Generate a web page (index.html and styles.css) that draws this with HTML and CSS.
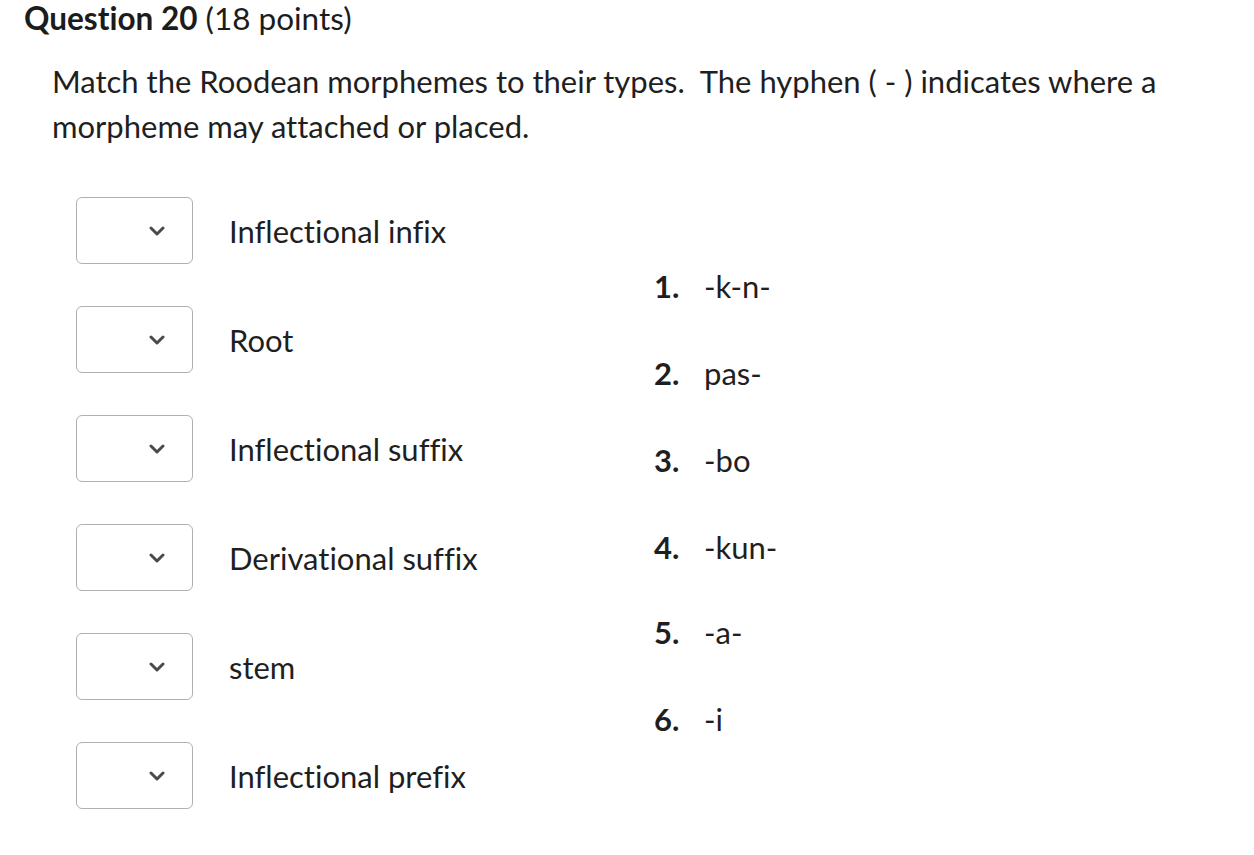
FILE: index.html
```html
<!DOCTYPE html>
<html>
<head>
<meta charset="utf-8">
<link rel="stylesheet" href="styles.css">
</head>
<body>
<div class="page">
  <h2 class="title"><b>Question 20</b> (18 points)</h2>
  <p class="prompt">Match the Roodean morphemes to their types.&nbsp; The hyphen ( - ) indicates where a morpheme may attached or placed.</p>
  <div class="match">
    <div class="left">
      <div class="row"><div class="select"><svg class="chev" viewBox="0 0 16 10" width="16" height="10"><path d="M2 2 L8 8 L14 2" fill="none" stroke="#4a4a4a" stroke-width="3" stroke-linecap="round" stroke-linejoin="round"/></svg></div><span class="label">Inflectional infix</span></div>
      <div class="row"><div class="select"><svg class="chev" viewBox="0 0 16 10" width="16" height="10"><path d="M2 2 L8 8 L14 2" fill="none" stroke="#4a4a4a" stroke-width="3" stroke-linecap="round" stroke-linejoin="round"/></svg></div><span class="label">Root</span></div>
      <div class="row"><div class="select"><svg class="chev" viewBox="0 0 16 10" width="16" height="10"><path d="M2 2 L8 8 L14 2" fill="none" stroke="#4a4a4a" stroke-width="3" stroke-linecap="round" stroke-linejoin="round"/></svg></div><span class="label">Inflectional suffix</span></div>
      <div class="row"><div class="select"><svg class="chev" viewBox="0 0 16 10" width="16" height="10"><path d="M2 2 L8 8 L14 2" fill="none" stroke="#4a4a4a" stroke-width="3" stroke-linecap="round" stroke-linejoin="round"/></svg></div><span class="label">Derivational suffix</span></div>
      <div class="row"><div class="select"><svg class="chev" viewBox="0 0 16 10" width="16" height="10"><path d="M2 2 L8 8 L14 2" fill="none" stroke="#4a4a4a" stroke-width="3" stroke-linecap="round" stroke-linejoin="round"/></svg></div><span class="label">stem</span></div>
      <div class="row"><div class="select"><svg class="chev" viewBox="0 0 16 10" width="16" height="10"><path d="M2 2 L8 8 L14 2" fill="none" stroke="#4a4a4a" stroke-width="3" stroke-linecap="round" stroke-linejoin="round"/></svg></div><span class="label">Inflectional prefix</span></div>
    </div>
    <ol class="right">
      <li><span class="num">1.</span><span class="val">-k-n-</span></li>
      <li><span class="num">2.</span><span class="val">pas-</span></li>
      <li><span class="num">3.</span><span class="val">-bo</span></li>
      <li><span class="num">4.</span><span class="val">-kun-</span></li>
      <li><span class="num">5.</span><span class="val">-a-</span></li>
      <li><span class="num">6.</span><span class="val">-i</span></li>
    </ol>
  </div>
</div>
</body>
</html>
```

FILE: styles.css
```css
html, body {
  margin: 0;
  padding: 0;
  background: #fff;
}
body {
  font-family: Lato, "Liberation Sans", sans-serif;
  font-variant-ligatures: none;
  color: #1f1f1f;
}
.page {
  padding: 0 0 40px 24px;
}
.title {
  margin: 0;
  font-size: 31.5px;
  font-weight: 400;
  line-height: 36px;
  color: #1c1c1c;
}
.title b {
  font-weight: 700;
}
.prompt {
  margin: 23px 0 0 28px;
  font-size: 31px;
  line-height: 45px;
  width: 1160px;
  color: #1f1f1f;
}
.match {
  display: flex;
  margin-top: 48px;
  margin-left: 52px;
}
.left {
  display: flex;
  flex-direction: column;
  gap: 42px;
  width: 580px;
}
.row {
  display: flex;
  align-items: center;
  height: 67px;
}
.select {
  box-sizing: border-box;
  width: 117px;
  height: 67px;
  flex: none;
  border: 1px solid #b0b0b0;
  border-radius: 6px;
  display: flex;
  align-items: center;
  justify-content: flex-end;
  padding-right: 27px;
}
.chev {
  display: block;
}
.label {
  margin-left: 36px;
  font-size: 31px;
  color: #1f1f1f;
}
.right {
  list-style: none;
  margin: 0;
  padding: 0;
  margin-left: -2px;
}
.right li {
  display: flex;
  font-size: 31px;
  line-height: 36px;
  color: #1f1f1f;
}
.right li:nth-child(1) { margin-top: 71px; }
.right li:nth-child(2) { margin-top: 51px; }
.right li:nth-child(3) { margin-top: 51px; }
.right li:nth-child(4) { margin-top: 51px; }
.right li:nth-child(5) { margin-top: 49px; }
.right li:nth-child(6) { margin-top: 51px; }
.num {
  font-weight: 700;
  width: 50px;
}
```
